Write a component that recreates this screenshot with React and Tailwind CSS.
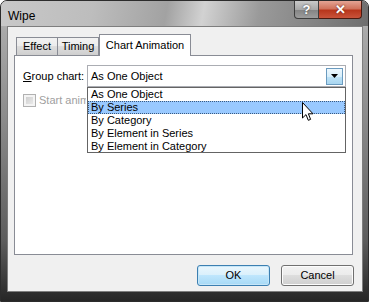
import React from 'react'

const font = { fontFamily: '"Liberation Sans", Arial, sans-serif' }

const items = ['As One Object', 'By Series', 'By Category', 'By Element in Series', 'By Element in Category']

function Cursor() {
  return (
    <svg width="12" height="20" viewBox="0 0 12 20" className="absolute left-[214px] top-[14px]">
      <path
        d="M0.5 0.5 L0.5 16 L4 12.6 L6.3 18.3 L8.6 17.4 L6.4 11.8 L11 11.8 Z"
        fill="#fff"
        stroke="#000"
        strokeWidth="1"
      />
    </svg>
  )
}

export default function App() {
  return (
    <div
      style={font}
      className="w-[369px] h-[302px] overflow-hidden rounded-t-[7px] border border-[#2c2c2c] bg-[linear-gradient(180deg,#c4c4c4_0%,#a9a9a9_10%,#8a8a8a_40%,#5c5c5c_80%,#262626_100%)] flex flex-col text-[11px] text-black"
    >
      {/* title bar */}
      <div className="h-[25px] flex items-start bg-[linear-gradient(100deg,#c8c8c8_0%,#bdbdbd_25%,#a2a2a2_45%,#d2d2d2_55%,#9a9a9a_70%,#6e6e6e_100%)]">
        <span className="pl-[7px] pt-[6px] text-[12px] text-black">Wipe</span>
        <div className="ml-auto mr-[6px] flex">
          <div className="w-[25px] h-[18px] rounded-bl-[4px] border border-t-0 border-[#3d3d3d] bg-[linear-gradient(180deg,#c9c9c9_0%,#a8a8a8_50%,#858585_55%,#9d9d9d_100%)] flex items-center justify-center">
            <span className="text-white font-bold text-[13px] leading-none [text-shadow:0_0_2px_#333]">?</span>
          </div>
          <div className="w-[43px] h-[18px] rounded-br-[4px] border border-l-0 border-t-0 border-[#4a1a10] bg-[linear-gradient(180deg,#e4a494_0%,#d0735c_45%,#b8361c_55%,#c9533a_100%)] flex items-center justify-center">
            <span className="text-white font-bold text-[13px] leading-none [text-shadow:0_0_2px_#5a1a0a]">✕</span>
          </div>
        </div>
      </div>

      {/* client area */}
      <div className="ml-[6px] w-[356px] h-[266px] bg-[#f0f0f0] border border-[#7e7e7e] flex flex-col">
        {/* tabs */}
        <div className="ml-[8px] pt-[7px] h-[28px] flex items-end">
          <div className="h-[18px] w-[42px] border border-b-0 border-[#898c95] bg-[linear-gradient(180deg,#f2f2f2_0%,#ebebeb_50%,#dddddd_50%,#cfcfcf_100%)] flex items-center justify-center">
            Effect
          </div>
          <div className="h-[18px] w-[41px] border border-l-0 border-b-0 border-[#898c95] bg-[linear-gradient(180deg,#f2f2f2_0%,#ebebeb_50%,#dddddd_50%,#cfcfcf_100%)] flex items-center justify-center">
            Timing
          </div>
          <div className="relative z-10 -mb-px h-[22px] w-[92px] border border-b-0 border-[#898c95] bg-white flex items-center justify-center pb-[1px]">
            Chart Animation
          </div>
        </div>

        {/* panel */}
        <div className="relative ml-[6px] w-[339px] h-[200px] border border-[#898c95] bg-white">
          <div className="flex items-center pt-[9px] pl-[8px]">
            <span className="w-[64px] whitespace-nowrap">
              <span className="underline">G</span>roup chart:
            </span>
            <div className="h-[22px] w-[259px] border border-[#abadb3] bg-white flex items-center pl-[3px] pr-[2px]">
              <span>As One Object</span>
              <div className="ml-auto h-[17px] w-[17px] border border-[#6b9bbf] bg-[linear-gradient(180deg,#eef8fe_0%,#d8effb_50%,#bfe3f7_50%,#a9d6f0_100%)] flex items-center justify-center">
                <svg width="7" height="4" viewBox="0 0 7 4">
                  <path d="M0 0 H7 L3.5 4 Z" fill="#000" />
                </svg>
              </div>
            </div>
          </div>

          <div className="flex items-center pt-[5px] pl-[8px] gap-[3px]">
            <div className="w-[13px] h-[13px] border border-[#b1b1b1] bg-[#f4f4f4] p-[2px]">
              <div className="w-full h-full bg-[linear-gradient(135deg,#cfcfcf,#e9e9e9)]" />
            </div>
            <span className="w-[47px] overflow-hidden whitespace-nowrap text-[#a0a0a0]">Start animating chart background</span>
          </div>

          {/* dropdown list */}
          <div className="absolute left-[72px] top-[31px] w-[259px] h-[66px] border border-[#646464] bg-white">
            {items.map((it, i) => (
              <div
                key={it}
                className={
                  i === 1
                    ? 'h-[13px] leading-[13px] pl-[3px] bg-[#99c9ff] outline outline-1 outline-dotted -outline-offset-1 outline-[#3a5a80]'
                    : 'h-[13px] leading-[13px] pl-[3px]'
                }
              >
                {it}
              </div>
            ))}
            <Cursor />
          </div>
        </div>

        {/* buttons */}
        <div className="mt-[10px] mr-[8px] flex justify-end gap-[11px]">
          <button className="w-[73px] h-[21px] rounded-[3px] border border-[#3c7fb1] bg-[linear-gradient(180deg,#eaf6fd_0%,#d9f0fc_50%,#bee6fd_50%,#a7d9f5_100%)] shadow-[inset_0_0_0_1px_#c6e6f8]">
            OK
          </button>
          <button className="w-[73px] h-[21px] rounded-[3px] border border-[#707070] bg-[linear-gradient(180deg,#f2f2f2_0%,#ebebeb_50%,#dddddd_50%,#cfcfcf_100%)] shadow-[inset_0_0_0_1px_#fcfcfc]">
            Cancel
          </button>
        </div>
      </div>
    </div>
  )
}
